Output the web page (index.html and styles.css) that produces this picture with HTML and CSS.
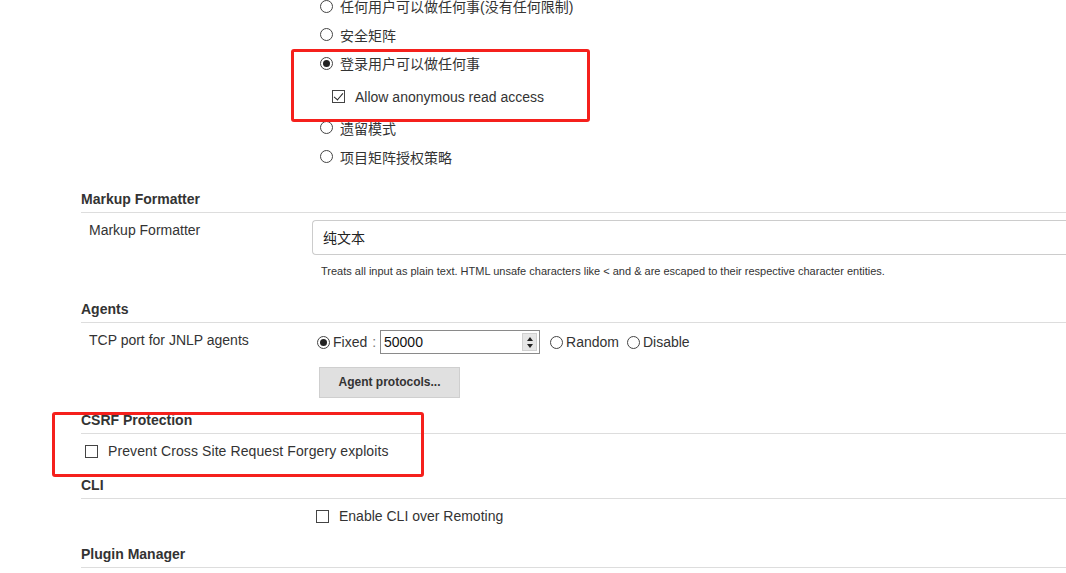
FILE: index.html
```html
<!DOCTYPE html>
<html>
<head>
<meta charset="utf-8">
<link rel="stylesheet" href="styles.css">
</head>
<body>
<div class="page">
  <div class="strategies">
    <div class="opt h28"><span class="radio"></span><span>任何用户可以做任何事(没有任何限制)</span></div>
    <div class="opt"><span class="radio"></span><span>安全矩阵</span></div>
    <div class="opt h28"><span class="radio on"></span><span>登录用户可以做任何事</span></div>
    <div class="opt sub"><span class="check on"></span><span>Allow anonymous read access</span></div>
    <div class="opt"><span class="radio"></span><span>遗留模式</span></div>
    <div class="opt"><span class="radio"></span><span>项目矩阵授权策略</span></div>
  </div>

  <h3 class="section h-markup">Markup Formatter</h3>
  <div class="row">
    <div class="label">Markup Formatter</div>
    <div class="control">
      <div class="select">纯文本</div>
      <div class="help">Treats all input as plain text. HTML unsafe characters like &lt; and &amp; are escaped to their respective character entities.</div>
    </div>
  </div>

  <h3 class="section h-agents">Agents</h3>
  <div class="row">
    <div class="label">TCP port for JNLP agents</div>
    <div class="control">
      <div class="ports">
        <span class="radio on small"></span><span class="ptext">Fixed <span class="colon">:</span></span>
        <div class="numbox"><span class="numval">50000</span><span class="spin"><span class="up"></span><span class="down"></span></span></div>
        <span class="radio small r2"></span><span class="ptext">Random</span>
        <span class="radio small r3"></span><span class="ptext">Disable</span>
      </div>
      <div class="button">Agent protocols...</div>
    </div>
  </div>

  <h3 class="section h-csrf">CSRF Protection</h3>
  <div class="row-full"><span class="check"></span><span class="wide">Prevent Cross Site Request Forgery exploits</span></div>

  <h3 class="section h-cli">CLI</h3>
  <div class="row">
    <div class="label"></div>
    <div class="control cli"><span class="check"></span><span>Enable CLI over Remoting</span></div>
  </div>

  <h3 class="section h-plugin">Plugin Manager</h3>

  <div class="mark mark1"></div>
  <div class="mark mark2"></div>
</div>
</body>
</html>
```
FILE: styles.css
```css
html, body {
  margin: 0;
  padding: 0;
  background: #fff;
  overflow: hidden;
}
body {
  font-family: "Liberation Sans", Arial, "Noto Sans CJK SC", sans-serif;
  font-size: 14px;
  color: #333;
}
.page {
  position: relative;
  display: flow-root;
  padding-left: 81px;
  height: 573px;
}
.strategies {
  margin-top: -8px;
  padding-left: 239px;
}
.opt {
  display: flex;
  align-items: center;
  height: 29px;
  font-family: "Liberation Sans", "Noto Sans CJK SC", sans-serif;
}
.opt.h28 {
  height: 28px;
}
.opt.sub {
  padding-left: 12px;
  margin-top: 5px;
  margin-bottom: 2px;
}
.radio {
  box-sizing: border-box;
  display: inline-block;
  width: 13px;
  height: 13px;
  border: 1px solid #444;
  border-radius: 50%;
  margin-right: 7px;
  position: relative;
  flex: none;
}
.radio.on::after {
  content: "";
  position: absolute;
  left: 2px;
  top: 2px;
  width: 7px;
  height: 7px;
  border-radius: 50%;
  background: #222;
}
.check {
  box-sizing: border-box;
  display: inline-block;
  width: 13px;
  height: 13px;
  border: 1px solid #444;
  margin-right: 10px;
  position: relative;
  flex: none;
}
.check.on::after {
  content: "";
  position: absolute;
  left: 3px;
  top: 0px;
  width: 4px;
  height: 8px;
  border-right: 1.5px solid #222;
  border-bottom: 1.5px solid #222;
  transform: rotate(40deg);
}
.section {
  margin: 0;
  font-size: 14px;
  font-weight: bold;
  line-height: 20px;
  padding-bottom: 3px;
  border-bottom: 1px solid #ddd;
  color: #333;
}
.h-markup { margin-top: 18px; }
.h-agents { margin-top: 20px; }
.h-csrf { margin-top: 12px; }
.h-cli { margin-top: 14px; }
.h-plugin { margin-top: 18px; }

.row {
  display: grid;
  grid-template-columns: 231px 1fr;
  padding-top: 7px;
}
.label {
  padding-left: 8px;
  line-height: 20px;
}
.control {
  min-width: 0;
}
.select {
  box-sizing: border-box;
  height: 35px;
  border: 1px solid #ccc;
  border-right: none;
  border-radius: 4px 0 0 4px;
  padding-left: 10px;
  line-height: 33px;
  font-family: "Noto Sans CJK SC", sans-serif;
  font-size: 14px;
  color: #222;
  width: 780px;
}
.help {
  font-size: 11px;
  line-height: 15px;
  margin-top: 9px;
  padding-left: 9px;
  color: #333;
}
.ports {
  display: flex;
  align-items: center;
  height: 24px;
  padding-left: 5px;
}
.radio.small {
  margin-right: 3px;
}
.ptext {
  margin-right: 4px;
}
.colon {
  color: #777;
  margin-left: 1px;
}
.numbox {
  box-sizing: border-box;
  width: 160px;
  height: 24px;
  border: 1px solid #8a8a8a;
  display: flex;
  align-items: center;
  padding-left: 3px;
  padding-right: 2px;
  margin-right: 10px;
  color: #111;
}
.numval { flex: 1; }
.spin {
  box-sizing: border-box;
  width: 15px;
  height: 18px;
  background: #e6e6e6;
  border: 1px solid #d0d0d0;
  display: flex;
  flex-direction: column;
  align-items: center;
  justify-content: center;
  gap: 3px;
}
.up {
  width: 0; height: 0;
  border-left: 3.5px solid transparent;
  border-right: 3.5px solid transparent;
  border-bottom: 4px solid #222;
}
.down {
  width: 0; height: 0;
  border-left: 3.5px solid transparent;
  border-right: 3.5px solid transparent;
  border-top: 4px solid #222;
}
.r3 { margin-left: 4px; }
.button {
  box-sizing: border-box;
  margin-top: 13px;
  margin-left: 7px;
  width: 141px;
  height: 31px;
  background: #e0e0e0;
  border: 1px solid #cfcfcf;
  font-size: 12px;
  font-weight: bold;
  line-height: 29px;
  text-align: center;
  color: #333;
}
.row-full {
  display: flex;
  align-items: center;
  padding-top: 7px;
  height: 20px;
  padding-left: 4px;
}
.wide {
  letter-spacing: 0.1px;
}
.cli {
  display: flex;
  align-items: center;
  height: 20px;
  padding-left: 4px;
}
.mark {
  position: absolute;
  box-sizing: border-box;
  border: 3px solid #f5201c;
  border-radius: 3px;
}
.mark1 {
  left: 291px;
  top: 49px;
  width: 299px;
  height: 73px;
}
.mark2 {
  left: 52px;
  top: 412px;
  width: 372px;
  height: 65px;
}
```
